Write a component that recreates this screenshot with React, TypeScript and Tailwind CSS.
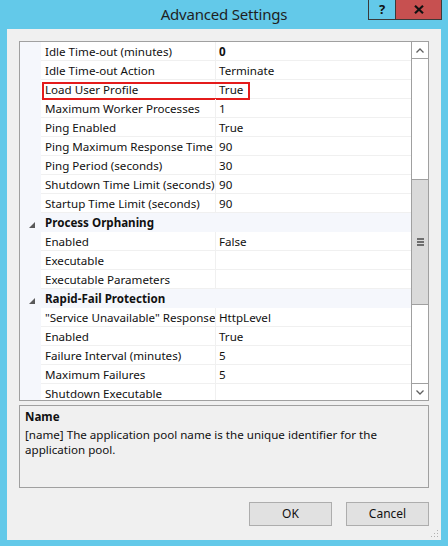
import React from "react";

type Row =
  | { kind: "cat"; label: string }
  | { kind: "prop"; label: string; value: string; bold?: boolean; boxed?: boolean };

const rows: Row[] = [
  { kind: "prop", label: "Idle Time-out (minutes)", value: "0", bold: true },
  { kind: "prop", label: "Idle Time-out Action", value: "Terminate" },
  { kind: "prop", label: "Load User Profile", value: "True", boxed: true },
  { kind: "prop", label: "Maximum Worker Processes", value: "1" },
  { kind: "prop", label: "Ping Enabled", value: "True" },
  { kind: "prop", label: "Ping Maximum Response Time (seconds)", value: "90" },
  { kind: "prop", label: "Ping Period (seconds)", value: "30" },
  { kind: "prop", label: "Shutdown Time Limit (seconds)", value: "90" },
  { kind: "prop", label: "Startup Time Limit (seconds)", value: "90" },
  { kind: "cat", label: "Process Orphaning" },
  { kind: "prop", label: "Enabled", value: "False" },
  { kind: "prop", label: "Executable", value: "" },
  { kind: "prop", label: "Executable Parameters", value: "" },
  { kind: "cat", label: "Rapid-Fail Protection" },
  { kind: "prop", label: "\"Service Unavailable\" Response Type", value: "HttpLevel" },
  { kind: "prop", label: "Enabled", value: "True" },
  { kind: "prop", label: "Failure Interval (minutes)", value: "5" },
  { kind: "prop", label: "Maximum Failures", value: "5" },
  { kind: "prop", label: "Shutdown Executable", value: "" },
];

const font = { fontFamily: '"Noto Sans", "Open Sans", sans-serif' };

function Tri() {
  return (
    <svg width="6" height="6" viewBox="0 0 6 6" className="mt-[3px]">
      <polygon points="6,0 6,6 0,6" fill="#595959" />
    </svg>
  );
}

export default function App() {
  return (
    <div
      className="w-[448px] h-[546px] bg-[#63c9e9] flex flex-col overflow-hidden text-[11.6px] text-[#111]"
      style={font}
    >
      {/* title bar */}
      <div className="relative h-[29px] shrink-0 flex items-center justify-center">
        <span className="text-[15px] text-[#1f1f1f] tracking-[-0.2px] mt-[-1px]">Advanced Settings</span>
        <div className="absolute top-0 right-[6px] flex h-[20px] border border-t-0 border-[#3a3a3a]">
          <div className="w-[27px] h-full flex items-center justify-center font-bold text-[13px] text-[#111] border-r border-[#3a3a3a]">
            ?
          </div>
          <div className="w-[45px] h-full bg-[#c75050] flex items-center justify-center">
            <svg width="10" height="9" viewBox="0 0 10 9">
              <path d="M1 0.8 L9 8.2 M9 0.8 L1 8.2" stroke="#111" strokeWidth="2.2" />
            </svg>
          </div>
        </div>
      </div>

      {/* client */}
      <div className="mx-[7px] h-[511px] bg-[#f0f0f0] flex flex-col pt-[12px] pl-[12px] pr-[12px] relative">
        {/* property grid */}
        <div className="h-[360px] w-[410px] border border-[#a0a0a0] bg-white flex">
          <div className="flex-1 overflow-hidden flex flex-col">
            {rows.map((r, i) =>
              r.kind === "cat" ? (
                <div key={i} className="h-[19px] shrink-0 bg-[#f5f7fc] flex items-center pt-[1px]">
                  <div className="w-[21px] flex justify-center pl-[2px]">
                    <Tri />
                  </div>
                  <span className="pl-[4px] font-bold">{r.label}</span>
                </div>
              ) : (
                <div key={i} className="h-[19px] shrink-0 flex relative">
                  <div className="w-[21px] shrink-0 bg-[#f5f7fc]" />
                  <div className="w-[175px] shrink-0 border-b border-r border-[#f0f0f0] pl-[4px] pt-[1px] flex items-center overflow-hidden whitespace-nowrap">
                    {r.label}
                  </div>
                  <div
                    className={
                      "flex-1 border-b border-[#f0f0f0] pl-[3px] pt-[1px] flex items-center whitespace-nowrap " +
                      (r.bold ? "font-bold" : "")
                    }
                  >
                    {r.value}
                  </div>
                  {r.boxed && (
                    <div className="absolute left-[22px] top-[2px] w-[208px] h-[18px] border-2 border-[#e41b1b] pointer-events-none" />
                  )}
                </div>
              )
            )}
          </div>
          {/* scrollbar */}
          <div className="w-[17px] shrink-0 border-l border-[#a0a0a0] flex flex-col bg-white">
            <div className="h-[17px] border-b border-[#a0a0a0] flex items-center justify-center">
              <svg width="8" height="5" viewBox="0 0 8 5">
                <path d="M0.5 4.5 L4 1 L7.5 4.5" stroke="#606060" strokeWidth="1.3" fill="none" />
              </svg>
            </div>
            <div className="h-[120px]" />
            <div className="h-[126px] bg-[#dadada] border-y border-[#a0a0a0] flex flex-col items-center justify-center gap-[1px]">
              <div className="w-[7px] h-[2px] bg-[#6e6e6e]" />
              <div className="w-[7px] h-[2px] bg-[#6e6e6e]" />
              <div className="w-[7px] h-[2px] bg-[#6e6e6e]" />
            </div>
            <div className="flex-1" />
            <div className="h-[17px] border-t border-[#a0a0a0] flex items-center justify-center">
              <svg width="8" height="5" viewBox="0 0 8 5">
                <path d="M0.5 0.5 L4 4 L7.5 0.5" stroke="#606060" strokeWidth="1.3" fill="none" />
              </svg>
            </div>
          </div>
        </div>

        {/* description */}
        <div className="mt-[4px] h-[83px] w-[410px] border border-[#a0a0a0] bg-[#f0f0f0] px-[5px] pt-[3px] leading-[15px]">
          <div className="font-bold">Name</div>
          <div className="mt-[3px] w-[380px]">
            [name] The application pool name is the unique identifier for the application pool.
          </div>
        </div>

        {/* buttons */}
        <div className="mt-[14px] w-[410px] flex justify-end gap-[14px]">
          <button className="w-[83px] h-[24px] bg-[#e1e1e1] border border-[#adadad] text-[12px] text-[#111]">
            OK
          </button>
          <button className="w-[83px] h-[24px] bg-[#e1e1e1] border border-[#adadad] text-[12px] text-[#111]">
            Cancel
          </button>
        </div>

        {/* resize grip */}
        <svg className="absolute right-[2px] bottom-[2px]" width="8" height="8" viewBox="0 0 8 8">
          <rect x="6" y="0" width="1" height="1" fill="#b0b0b0" />
          <rect x="3" y="3" width="1" height="1" fill="#b0b0b0" />
          <rect x="6" y="3" width="1" height="1" fill="#b0b0b0" />
          <rect x="0" y="6" width="1" height="1" fill="#b0b0b0" />
          <rect x="3" y="6" width="1" height="1" fill="#b0b0b0" />
          <rect x="6" y="6" width="1" height="1" fill="#b0b0b0" />
        </svg>
      </div>
    </div>
  );
}
